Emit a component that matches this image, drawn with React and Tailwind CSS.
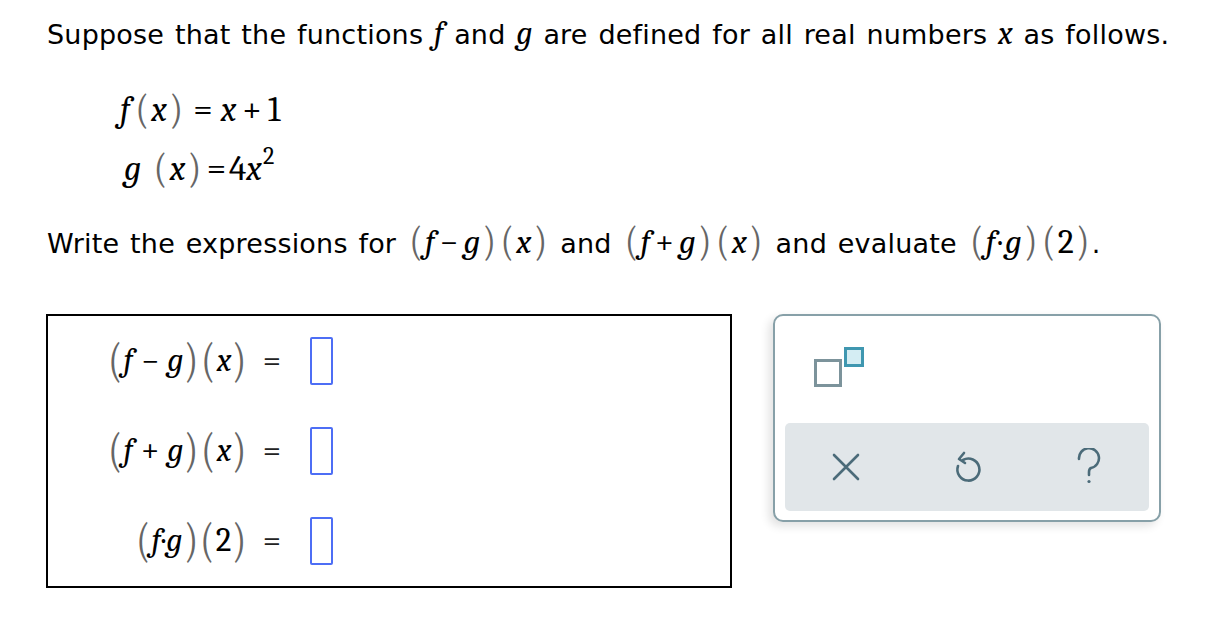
import React from 'react';

function P({ children, big }) {
    return (
        <span className={big ? 'inline-block text-[#666] not-italic scale-y-[1.45] scale-x-[1.1] mx-[2px]' : 'inline-block text-[#666] not-italic scale-y-[1.2] mx-[2.5px]'}>
            {children}
        </span>
    );
}

function I({ children }) {
    return <span className="italic">{children}</span>;
}

function MathText({ children, className = '' }) {
    return <span className={'font-serif text-black tracking-normal ' + className}>{children}</span>;
}

function AnswerRow({ left }) {
    return (
        <div className="flex items-center h-[90px]">
            <div className="w-[214px] flex justify-end pr-[14px] text-[33px]">
                <MathText className="flex items-center">{left}</MathText>
            </div>
            <span className="font-serif text-[33px] text-[#222] w-[20px] text-center">=</span>
            <div className="ml-[28px] w-[23px] h-[48px] border-2 border-[#4d6ef5] rounded-[2px]"></div>
        </div>
    );
}

export default function App() {
    return (
        <div className="w-[1220px] h-[624px] bg-white relative overflow-hidden font-[DejaVu_Sans]">
            <div className="pl-[47px] pt-[14px] text-[27px] text-black leading-[38px] tracking-[0.2px] [word-spacing:2px]">
                Suppose that the functions <MathText className="text-[33px]"><I>f</I></MathText> and <MathText className="text-[33px]"><I>g</I></MathText> are defined for all real numbers <MathText className="text-[33px]"><I>x</I></MathText> as follows.
            </div>

            <div className="pl-[120px] pt-[26px] text-[35px] leading-[59px]">
                <MathText className="block">
                    <I>f</I><span className="ml-[3px]"></span><P>(</P><I>x</I><P>)</P><span className="mx-[8px]">=</span><I>x</I><span className="mx-[6px]">+</span>1
                </MathText>
                <MathText className="block">
                    <span className="ml-[4px]"></span><I>g</I><span className="ml-[10px]"></span><P>(</P><I>x</I><P>)</P><span className="mx-[3px]">=</span>4<I>x</I><span className="text-[24px] relative -top-[16px] ml-[1px]">2</span>
                </MathText>
            </div>

            <div className="pl-[47px] pt-[20px] text-[27px] text-black leading-[40px] tracking-[0.2px] [word-spacing:2px]">
                Write the expressions for <MathText className="text-[34px]"><P>(</P><I>f</I><span className="mx-[5px]">−</span><I>g</I><P>)</P><P>(</P><I>x</I><P>)</P></MathText> and <MathText className="text-[34px]"><P>(</P><I>f</I><span className="mx-[5px]">+</span><I>g</I><P>)</P><P>(</P><I>x</I><P>)</P></MathText> and evaluate <MathText className="text-[34px]"><P>(</P><I>f</I><span className="mx-[3px]">·</span><I>g</I><P>)</P><P>(</P>2<P>)</P></MathText>.
            </div>

            <div className="flex items-start pl-[46px] pt-[50px] gap-[41px]">
                <div className="w-[686px] h-[274px] border-2 border-black flex flex-col">
                    <AnswerRow left={<><P big>(</P><I>f</I><span className="mx-[8px]">−</span><I>g</I><P big>)</P><P big>(</P><I>x</I><P big>)</P></>} />
                    <AnswerRow left={<><P big>(</P><I>f</I><span className="mx-[8px]">+</span><I>g</I><P big>)</P><P big>(</P><I>x</I><P big>)</P></>} />
                    <AnswerRow left={<><P big>(</P><I>f</I><span className="mx-[1px]">·</span><I>g</I><P big>)</P><P big>(</P>2<P big>)</P></>} />
                </div>

                <div className="w-[388px] h-[208px] border-2 border-[#87a0a8] rounded-[10px] bg-white shadow-[-4px_4px_10px_rgba(0,0,0,0.12)] flex flex-col px-[10px] pb-[9px]">
                    <div className="h-[107px] relative">
                        <div className="absolute left-[29px] top-[43px] w-[28px] h-[28px] border-[3px] border-[#7c939b]"></div>
                        <div className="absolute left-[59px] top-[31px] w-[20px] h-[20px] border-[3px] border-[#3f97b0] bg-[#d4edf3]"></div>
                    </div>
                    <div className="flex-1 bg-[#e1e6e9] rounded-[5px] flex items-center justify-around">
                        <svg width="28" height="28" viewBox="0 0 28 28" fill="none" stroke="#4b6b79" strokeWidth="2.6" strokeLinecap="round">
                            <path d="M2 2 L26 26 M26 2 L2 26" />
                        </svg>
                        <svg width="30" height="34" viewBox="0 0 30 34" fill="none" stroke="#4b6b79" strokeWidth="2.6" strokeLinecap="round" strokeLinejoin="round">
                            <path d="M10 10 A11 11 0 1 1 5 16" />
                            <path d="M11 3 L6 9 L12 13" />
                        </svg>
                        <svg width="26" height="38" viewBox="0 0 26 38" fill="none" stroke="#4b6b79" strokeWidth="2.6" strokeLinecap="round">
                            <path d="M3 11 A10 10 0 1 1 15 20 Q13 21 13 24 L13 27" />
                            <circle cx="13" cy="33.5" r="1.6" fill="#4b6b79" stroke="none" />
                        </svg>
                    </div>
                </div>
            </div>
        </div>
    );
}
